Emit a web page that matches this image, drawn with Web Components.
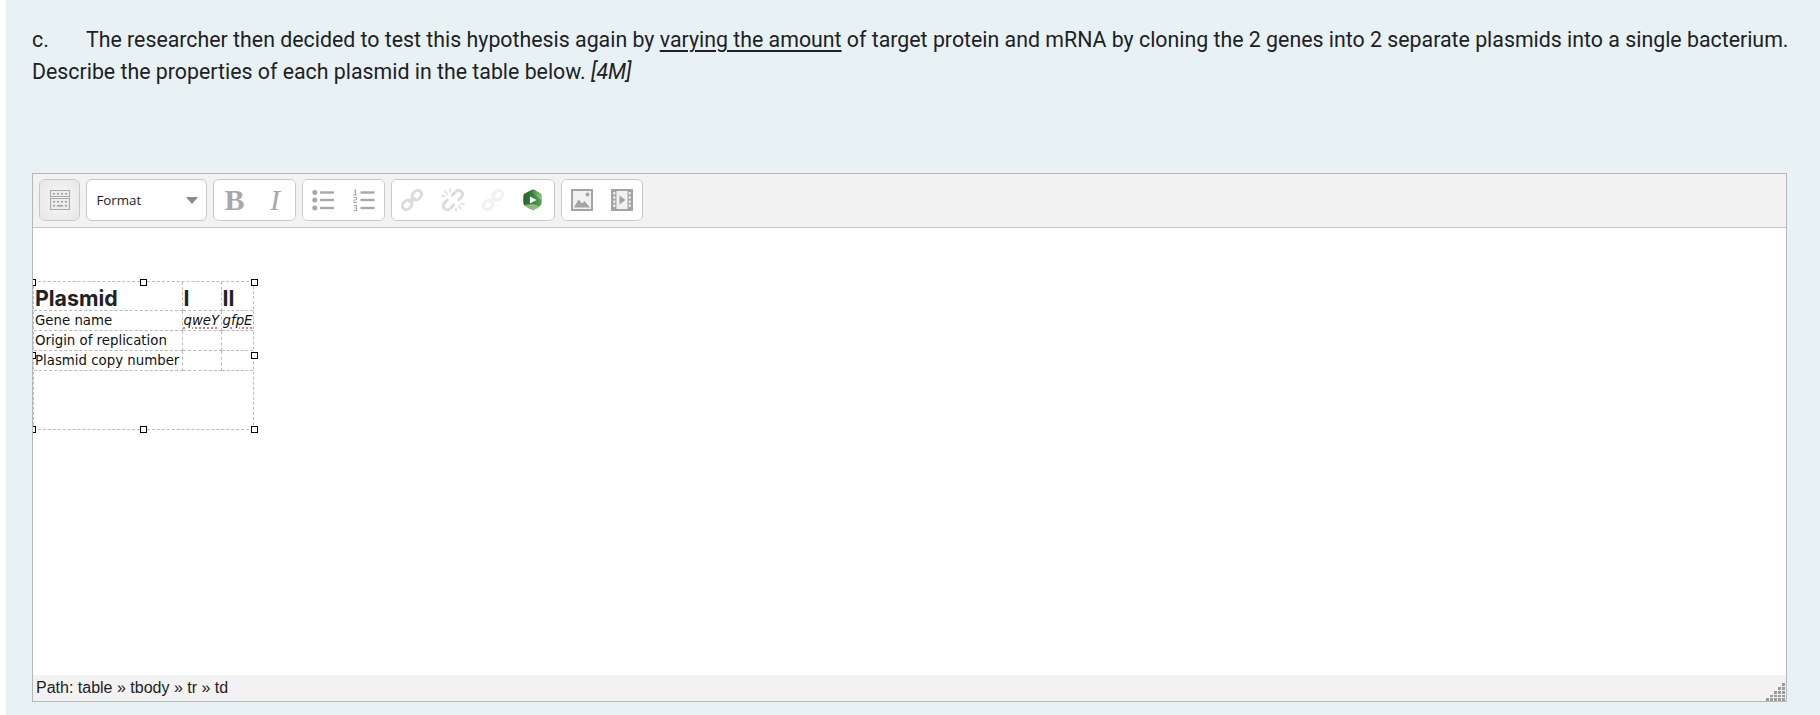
<!DOCTYPE html>
<html>
<head>
<meta charset="utf-8">
<title>Question</title>
<style>
  html, body { margin: 0; padding: 0; background: #fff; height: 715px; overflow: hidden; }
  body { padding-left: 6px; font-family: Roboto, sans-serif; }
</style>
</head>
<body>
<question-panel>
  <question-text></question-text>
  <rich-editor>
    <tool-group slot="tools"><tool-button pressed icon="kitchen"></tool-button></tool-group>
    <format-select slot="tools"></format-select>
    <tool-group slot="tools">
      <tool-button glyph="bold">B</tool-button>
      <tool-button glyph="italic">I</tool-button>
    </tool-group>
    <tool-group slot="tools">
      <tool-button icon="ul"></tool-button>
      <tool-button icon="ol"></tool-button>
    </tool-group>
    <tool-group slot="tools">
      <tool-button icon="link"></tool-button>
      <tool-button icon="unlink"></tool-button>
      <tool-button icon="anchor"></tool-button>
      <tool-button icon="panopto"></tool-button>
    </tool-group>
    <tool-group slot="tools">
      <tool-button icon="image"></tool-button>
      <tool-button icon="media"></tool-button>
    </tool-group>
    <plasmid-table></plasmid-table>
    <span slot="path">Path: table » tbody » tr » td</span>
  </rich-editor>
</question-panel>

<script>
const chain = color => `<g transform="rotate(-45 11 11)" fill="none" stroke="${color}" stroke-width="3"><rect x="-1" y="7" width="10.500" height="8" rx="4"/><rect x="12.500" y="7" width="10.500" height="8" rx="4"/><path d="M7 11h8" stroke-width="3.500"/></g>`

const ICONS = {
  kitchen: `<rect x="1.500" y="1.500" width="19" height="6" fill="#ececec" stroke="#a8a8a8"/><rect x="1.500" y="9.500" width="19" height="11" fill="#ececec" stroke="#a8a8a8"/><path d="M4 4h2v1.500H4zM8 4h2v1.500H8zM12 4h2v1.500h-2zM16 4h2v1.500h-2zM4 12h2v1.500H4zM8 12h2v1.500H8zM12 12h2v1.500h-2zM16 12h2v1.500h-2zM4 16h2v1.500H4zM8 16h6v1.500H8zM16 16h2v1.500h-2z" fill="#9c9c9c"/>`,
  ul: `<g fill="#a8a8a8"><circle cx="2.800" cy="3.500" r="2.500"/><circle cx="2.800" cy="11" r="2.500"/><circle cx="2.800" cy="19" r="2.500"/><rect x="8" y="2.300" width="14" height="2.400"/><rect x="8" y="9.800" width="14" height="2.400"/><rect x="8" y="17.800" width="14" height="2.400"/></g>`,
  ol: `<g fill="#a8a8a8"><rect x="7.500" y="2.300" width="14" height="2.400"/><rect x="7.500" y="9.800" width="14" height="2.400"/><rect x="7.500" y="17.800" width="14" height="2.400"/><path d="M1 .5h2v5h1v1H.5v-1h1.200V1.500H1zM.5 8h3.500v3.200H1.500v1.800H4v1H.5v-3.600H3V9H.5zM.5 16h3.500v6H.5v-1H3v-1.500H1.200v-1H3V17H.5z"/></g>`,
  link: chain('#dcdcdc'),
  unlink: `<g transform="rotate(-45 11 11)" fill="none" stroke="#dcdcdc" stroke-width="3" stroke-linecap="round"><path d="M8 15H3a4 4 0 0 1 0-8h4"/><path d="M14 7h5a4 4 0 0 1 0 8h-4"/></g><g stroke="#dcdcdc" stroke-width="1.600" stroke-linecap="round"><path d="M3 2.500l2.500 2.500M8 0v3M0 7h3M19 19.500L16.500 17M14 22v-3M22 15h-3"/></g>`,
  anchor: chain('#f1f1f1'),
  panopto: `<defs><linearGradient id="pg" x1="0" y1="0" x2="1" y2="0"><stop offset="0" stop-color="#245f2c"/><stop offset=".6" stop-color="#3d8a42"/><stop offset="1" stop-color="#5fa35a"/></linearGradient><linearGradient id="pt" x1="0" y1="0" x2="1" y2="1"><stop offset="0" stop-color="#3d8a42"/><stop offset="1" stop-color="#a6d09a"/></linearGradient></defs><path d="M11 .5c1 0 7 3.500 8 4.500s1 10 0 11-7 5-8 5-8-4-9-5-1-10 0-11 8-4.500 9-4.500z" fill="url(#pg)"/><path d="M11 .5c1 0 7 3.500 8 4.500.6.600.8 3.500.8 6l-5-3.500-3.300-3z" fill="url(#pt)"/><path d="M2 16c1 1 8 5 9 5s5-2 7-3.500l-7-2.500-5 .5z" fill="#86bd7b"/><path d="M8 7.500l6.500 3.500L8 14.500z" fill="#fff"/>`,
  image: `<rect x="1" y="1" width="20" height="20" fill="#f1f1f1" stroke="#a4a4a4" stroke-width="2"/><circle cx="16.500" cy="5.500" r="1.900" fill="#a4a4a4"/><path d="M3 18.500l4.500-8 3.500 4 2.500-2.500 5.500 6.500z" fill="#a4a4a4"/>`,
  media: `<rect x="1" y="1" width="20" height="20" fill="#f1f1f1" stroke="#a4a4a4" stroke-width="2"/><path d="M1 1h4.500v20H1zM16.500 1H21v20h-4.500z" fill="#a4a4a4"/><path d="M2.300 3h2v2.500h-2zM2.300 7.200h2v2.500h-2zM2.300 11.400h2v2.500h-2zM2.300 15.600h2v2.500h-2zM17.700 3h2v2.500h-2zM17.700 7.200h2v2.500h-2zM17.700 11.400h2v2.500h-2zM17.700 15.600h2v2.500h-2z" fill="#f1f1f1"/><path d="M8.500 6.500l6 4.500-6 4.500z" fill="#a4a4a4"/>`
}

class QuestionPanel extends HTMLElement {
  constructor() {
    super()
    this.attachShadow({ mode: 'open' })
    this.shadowRoot.innerHTML = `
      <style>
        :host {
          display: block;
          height: 715px;
          box-sizing: border-box;
          background: #e8f2f5;
          padding: 24px 33px 0 26px;
        }
      </style>
      <slot></slot>
    `
  }
}

class QuestionText extends HTMLElement {
  constructor() {
    super()
    this.attachShadow({ mode: 'open' })
    this.shadowRoot.innerHTML = `
      <style>
        :host {
          display: block;
          height: 149px;
          font: 21.330px/32px Roboto, sans-serif;
          color: #1d2125;
          white-space: nowrap;
        }
        .marker { display: inline-block; width: 54px; }
        u { text-underline-offset: 3px; }
      </style>
      <div><span class="marker">c.</span>The researcher then decided to test this hypothesis again by <u>varying the amount</u> of target protein and mRNA by cloning the 2 genes into 2 separate plasmids into a single bacterium.</div>
      <div>Describe the properties of each plasmid in the table below. <i>[4M]</i></div>
    `
  }
}

class RichEditor extends HTMLElement {
  constructor() {
    super()
    this.attachShadow({ mode: 'open' })
    this.shadowRoot.innerHTML = `
      <style>
        :host {
          display: flex;
          flex-direction: column;
          height: 529px;
          box-sizing: border-box;
          border: 1px solid #b8b8b8;
          background: #fff;
          position: relative;
        }
        .toolbar {
          display: flex;
          gap: 6px;
          height: 54px;
          box-sizing: border-box;
          padding: 5px 6px;
          background: #f2f2f2;
          border-bottom: 1px solid #c4c4c4;
        }
        .content { flex: 1; padding-top: 53px; overflow: hidden; }
        .path {
          height: 26px;
          box-sizing: border-box;
          padding: 3px 3px 0;
          background: #f2f2f2;
          font: 16px/20px "Liberation Sans", Arial, sans-serif;
          color: #1d2125;
        }
        .grip {
          position: absolute;
          right: 0;
          bottom: 0;
          width: 20px;
          height: 19px;
        }
      </style>
      <div class="toolbar"><slot name="tools"></slot></div>
      <div class="content"><slot></slot></div>
      <div class="path"><slot name="path"></slot></div>
      <svg class="grip" viewBox="0 0 20 19" fill="#9a9a9a">
        <path d="M16 1h3v3h-3zM12 5h3v3h-3zM16 5h3v3h-3zM8 9h3v3H8zM12 9h3v3h-3zM16 9h3v3h-3zM4 13h3v2H4zM8 13h3v2H8zM12 13h3v2h-3zM16 13h3v2h-3zM0 16h3v3H0zM4 16h3v3H4zM8 16h3v3H8zM12 16h3v3h-3zM16 16h3v3h-3z"/>
      </svg>
    `
  }
}

class ToolGroup extends HTMLElement {
  constructor() {
    super()
    this.attachShadow({ mode: 'open' })
    this.shadowRoot.innerHTML = `
      <style>
        :host {
          display: flex;
          height: 42px;
          box-sizing: border-box;
          border: 1px solid #c8c8c8;
          border-radius: 6px;
          background: #fff;
          overflow: hidden;
        }
        ::slotted(tool-button + tool-button) { border-left: 1px solid #d0d0d0; }
      </style>
      <slot></slot>
    `
  }
}

class ToolButton extends HTMLElement {
  constructor() {
    super()
    this.attachShadow({ mode: 'open' })
  }

  connectedCallback() {
    const glyph = this.getAttribute('glyph')
    const inner = glyph
      ? `<span class="${glyph}"><slot></slot></span>`
      : `<svg viewBox="0 0 22 22">${ICONS[this.getAttribute('icon')]}</svg>`
    this.shadowRoot.innerHTML = `
      <style>
        :host {
          display: flex;
          align-items: center;
          justify-content: center;
          width: 40.400px;
          height: 40px;
          box-sizing: border-box;
          background: #fff;
          color: #a8a8a8;
        }
        :host([pressed]) { width: 39.400px; background: radial-gradient(circle, #f8f8f8 0, #e6e6e6 100%); }
        svg { width: 22px; height: 22px; display: block; overflow: visible; }
        span { font: 30px/40px "Liberation Serif", serif; }
        .bold { font-weight: 700; }
        .italic { font-style: italic; }
      </style>
      ${inner}
    `
  }
}

class FormatSelect extends HTMLElement {
  constructor() {
    super()
    this.attachShadow({ mode: 'open' })
    this.shadowRoot.innerHTML = `
      <style>
        :host {
          display: flex;
          align-items: center;
          justify-content: space-between;
          width: 121px;
          height: 42px;
          box-sizing: border-box;
          padding: 0 8px 0 9px;
          border: 1px solid #c8c8c8;
          border-radius: 6px;
          background: #fff;
          font: 13.300px "Open Sans", sans-serif;
          color: #1d2125;
        }
        .arrow {
          width: 0;
          height: 0;
          border: 6.500px solid transparent;
          border-top: 7px solid #8a8a8a;
          border-bottom: 0;
        }
      </style>
      <span>Format</span><span class="arrow"></span>
    `
  }
}

class PlasmidTable extends HTMLElement {
  constructor() {
    super()
    this.attachShadow({ mode: 'open' })
    this.shadowRoot.innerHTML = `
      <style>
        :host {
          display: block;
          position: relative;
          width: 221px;
          height: 149px;
          box-sizing: border-box;
          border: 1px dashed #bbb;
          font: 13.330px/17px "DejaVu Sans", Verdana, sans-serif;
          color: #111;
        }
        table { border-collapse: collapse; width: 100%; table-layout: fixed; }
        td, th {
          border: 1px dashed #bbb;
          padding: 0 0 0 1px;
          text-align: left;
          white-space: nowrap;
          height: 19px;
        }
        tr:first-child th { border-top: 0; }
        td:first-child, th:first-child { border-left: 0; }
        td:last-child, th:last-child { border-right: 0; }
        th {
          font: 700 21.330px/24px Inter, Roboto, sans-serif;
          color: #222;
          height: 26px;
          padding-top: 2px;
          vertical-align: bottom;
        }
        i {
          text-decoration: underline dotted #d08080 2px;
          text-underline-offset: 2px;
        }
        .h {
          position: absolute;
          width: 5px;
          height: 5px;
          border: 1px solid #000;
          background: #fff;
        }
      </style>
      <table>
        <colgroup><col style="width:148px"><col style="width:39px"><col style="width:32px"></colgroup>
        <tr><th>Plasmid</th><th>I</th><th>II</th></tr>
        <tr><td>Gene name</td><td><i>qweY</i></td><td><i>gfpE</i></td></tr>
        <tr><td>Origin of replication</td><td></td><td></td></tr>
        <tr><td>Plasmid copy number</td><td></td><td></td></tr>
      </table>
      <span class="h" style="left:-5px;top:-3px"></span>
      <span class="h" style="left:106px;top:-3px"></span>
      <span class="h" style="left:217px;top:-3px"></span>
      <span class="h" style="left:-5px;top:70px"></span>
      <span class="h" style="left:217px;top:70px"></span>
      <span class="h" style="left:-5px;top:144px"></span>
      <span class="h" style="left:106px;top:144px"></span>
      <span class="h" style="left:217px;top:144px"></span>
    `
  }
}

customElements.define('question-panel', QuestionPanel)
customElements.define('question-text', QuestionText)
customElements.define('rich-editor', RichEditor)
customElements.define('tool-group', ToolGroup)
customElements.define('tool-button', ToolButton)
customElements.define('format-select', FormatSelect)
customElements.define('plasmid-table', PlasmidTable)
</script>
</body>
</html>
